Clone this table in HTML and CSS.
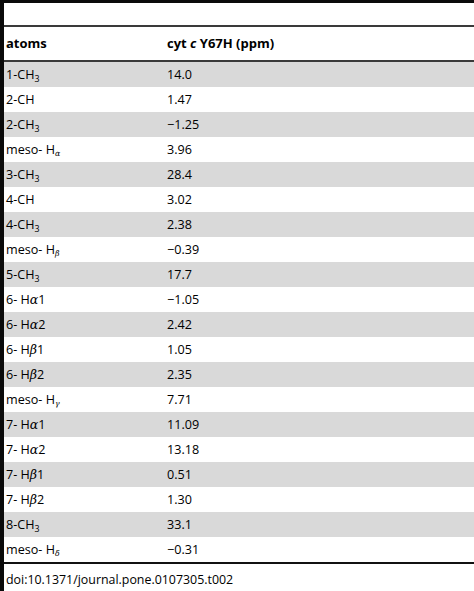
FILE: index.html
```html
<!DOCTYPE html>
<html>
<head>
<meta charset="utf-8">
<link rel="stylesheet" href="styles.css">
</head>
<body>
<div class="page">
  <div class="topgap"></div>
  <table class="data">
    <thead>
      <tr><th class="c1">atoms</th><th class="c2">cyt <i>c</i> Y67H (ppm)</th></tr>
    </thead>
    <tbody>
      <tr class="g"><td>1-CH<span class="sb">3</span></td><td>14.0</td></tr>
      <tr><td>2-CH</td><td>1.47</td></tr>
      <tr class="g"><td>2-CH<span class="sb">3</span></td><td>−1.25</td></tr>
      <tr><td>meso- H<span class="sb gk">α</span></td><td>3.96</td></tr>
      <tr class="g"><td>3-CH<span class="sb">3</span></td><td>28.4</td></tr>
      <tr><td>4-CH</td><td>3.02</td></tr>
      <tr class="g"><td>4-CH<span class="sb">3</span></td><td>2.38</td></tr>
      <tr><td>meso- H<span class="sb gk">β</span></td><td>−0.39</td></tr>
      <tr class="g"><td>5-CH<span class="sb">3</span></td><td>17.7</td></tr>
      <tr><td>6- H<span class="gk">α</span>1</td><td>−1.05</td></tr>
      <tr class="g"><td>6- H<span class="gk">α</span>2</td><td>2.42</td></tr>
      <tr><td>6- H<span class="gk">β</span>1</td><td>1.05</td></tr>
      <tr class="g"><td>6- H<span class="gk">β</span>2</td><td>2.35</td></tr>
      <tr><td>meso- H<span class="sb gk">γ</span></td><td>7.71</td></tr>
      <tr class="g"><td>7- H<span class="gk">α</span>1</td><td>11.09</td></tr>
      <tr><td>7- H<span class="gk">α</span>2</td><td>13.18</td></tr>
      <tr class="g"><td>7- H<span class="gk">β</span>1</td><td>0.51</td></tr>
      <tr><td>7- H<span class="gk">β</span>2</td><td>1.30</td></tr>
      <tr class="g"><td>8-CH<span class="sb">3</span></td><td>33.1</td></tr>
      <tr><td>meso- H<span class="sb gk">δ</span></td><td>−0.31</td></tr>
    </tbody>
  </table>
  <div class="doi">doi:10.1371/journal.pone.0107305.t002</div>
</div>
</body>
</html>
```
FILE: styles.css
```css
html, body {
  margin: 0;
  padding: 0;
  background: #fff;
}
body {
  font-family: "Open Sans", "Liberation Sans", sans-serif;
  color: #000;
}
.page {
  width: 474px;
  height: 591px;
  box-sizing: border-box;
  border-top: 3px solid #0a0a0a;
  border-left: 4px solid #0a0a0a;
  overflow: hidden;
}
.topgap {
  height: 22px;
  border-bottom: 2px solid #3a3a3a;
}
.data {
  width: 100%;
  border-collapse: collapse;
  font-size: 12.6px;
}
.data th {
  height: 32px;
  padding: 0 0 1px 2px;
  text-align: left;
  font-weight: 700;
  font-size: 13px;
  border-bottom: 2px solid #3a3a3a;
  vertical-align: middle;
}
.data th.c1 {
  width: 159px;
}
.data th i {
  font-style: italic;
}
.data td {
  height: 25px;
  padding: 0 0 0 2px;
  vertical-align: middle;
  line-height: 25px;
}
.data tbody tr:last-child td {
  border-bottom: 2px solid #111;
}
.data tr.g td {
  background: #d9d9d9;
}
.sb {
  font-size: 0.7em;
  vertical-align: -0.3em;
  line-height: 0;
}
.gk {
  font-family: "DejaVu Serif", "Liberation Serif", serif;
  font-style: italic;
}
.sb.gk {
  font-size: 0.62em;
}
.doi {
  padding: 7px 0 0 2px;
  font-size: 12.4px;
  color: #000;
}
```
